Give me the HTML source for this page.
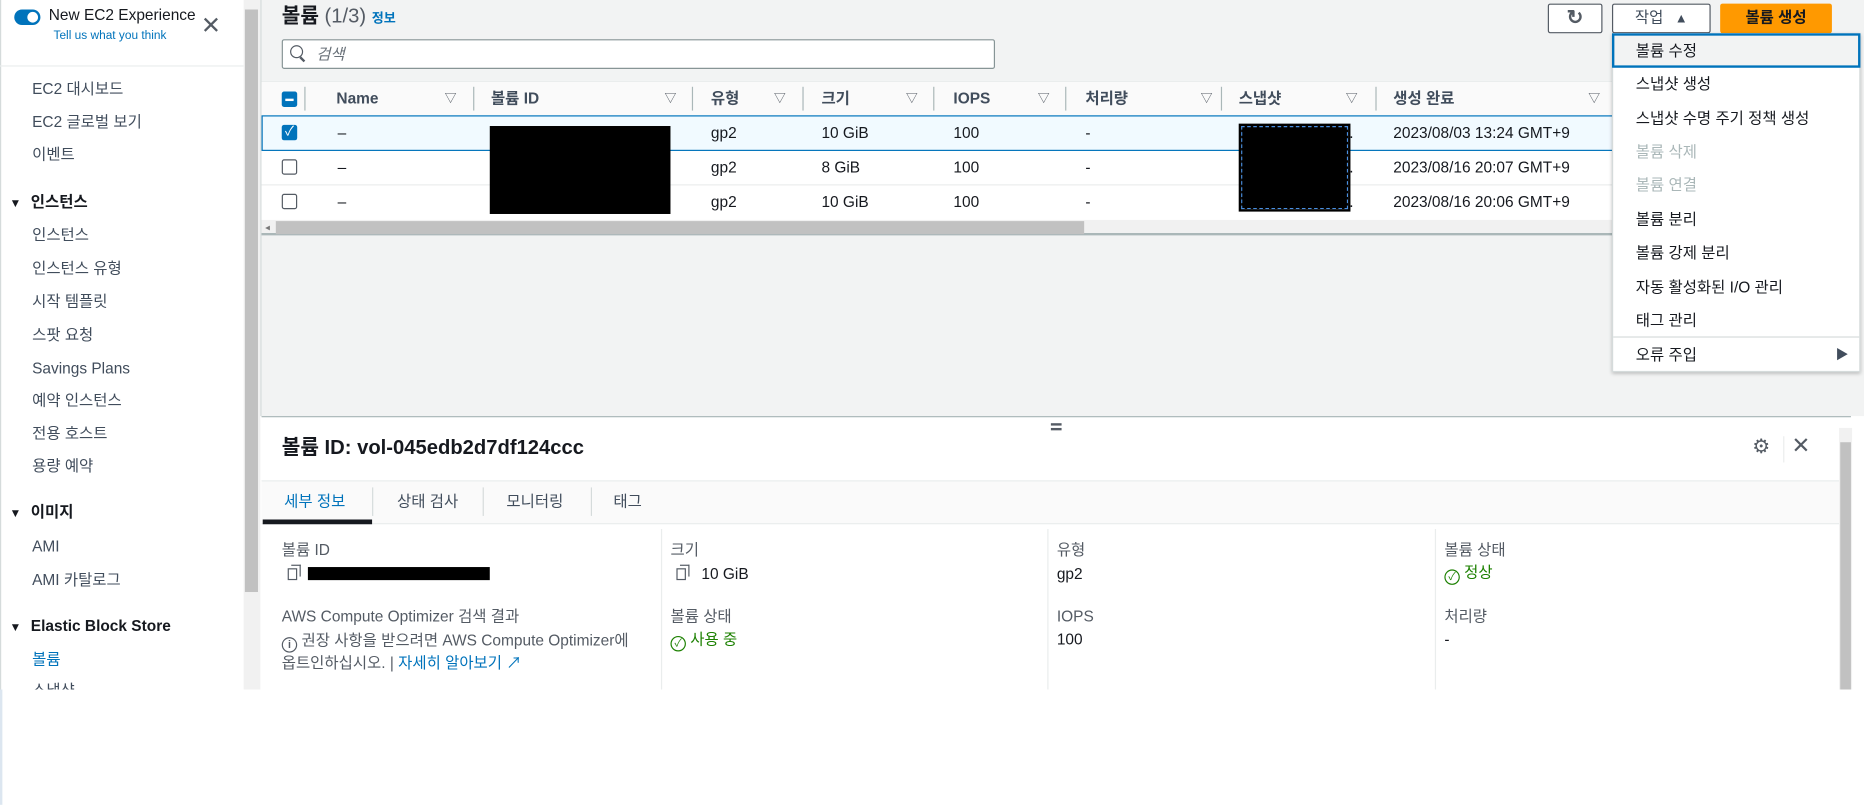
<!DOCTYPE html>
<html><head><meta charset="utf-8"><style>
*{box-sizing:border-box;margin:0;padding:0}
html,body{width:1864px;height:805px;overflow:hidden;background:#fff}
#w{position:absolute;left:0;top:0;width:1568px;height:677px;transform:scale(1.18878);transform-origin:0 0;font-family:"Liberation Sans","Noto Sans CJK KR",sans-serif;font-size:13px;line-height:16px;color:#16191f}
.a{position:absolute;white-space:nowrap}
.nav{left:27px;color:#414d5c}
.sec{left:8px;font-weight:bold;color:#16191f}
.sec:before{content:"▼";font-size:10px;margin-right:8px}
.th{font-weight:bold;color:#414d5c;top:75px}
.sort{top:76px;font-size:10px;color:#545b64}
.sep{top:73px;width:1px;height:20px;background:#aab7b8}
.cb{width:13px;height:13px;border:1px solid #545b64;border-radius:2px;background:#fff}
.td{color:#16191f}
.mi{left:1376px;font-size:13px}
.lab{color:#545b64}
</style></head><body><div id="w">
<div class="a" style="left:0;top:0;width:205px;height:580px;background:#fff;border-left:1px solid #d5dbdb"></div>
<div class="a" style="left:0;top:580px;width:2px;height:97px;background:#dce6f0"></div>
<div class="a" style="left:12px;top:8px;width:22px;height:13px;border-radius:7px;background:#0073bb"></div>
<div class="a" style="left:23px;top:10px;width:9px;height:9px;border-radius:50%;background:#fff"></div>
<div class="a" style="left:41px;top:5px;font-size:13px">New EC2 Experience</div>
<div class="a" style="left:45px;top:23px;font-size:10px;color:#0073bb">Tell us what you think</div>
<div class="a" style="left:169px;top:11px;font-size:20px;line-height:22px;color:#545b64">✕</div>
<div class="a" style="left:0;top:55px;width:205px;height:1px;background:#eaeded"></div>
<div class="a nav" style="top:67px">EC2 대시보드</div>
<div class="a nav" style="top:95px">EC2 글로벌 보기</div>
<div class="a nav" style="top:122px">이벤트</div>
<div class="a sec" style="top:162px">인스턴스</div>
<div class="a nav" style="top:190px">인스턴스</div>
<div class="a nav" style="top:218px">인스턴스 유형</div>
<div class="a nav" style="top:246px">시작 템플릿</div>
<div class="a nav" style="top:274px">스팟 요청</div>
<div class="a nav" style="top:302px">Savings Plans</div>
<div class="a nav" style="top:329px">예약 인스턴스</div>
<div class="a nav" style="top:357px">전용 호스트</div>
<div class="a nav" style="top:384px">용량 예약</div>
<div class="a sec" style="top:423px">이미지</div>
<div class="a nav" style="top:452px">AMI</div>
<div class="a nav" style="top:480px">AMI 카탈로그</div>
<div class="a sec" style="top:519px">Elastic Block Store</div>
<div class="a nav" style="top:547px;color:#0073bb">볼륨</div>
<div class="a" style="left:0;top:570px;width:205px;height:10px;overflow:hidden"><div class="a nav" style="top:3px">스냅샷</div></div>
<div class="a" style="left:205px;top:0;width:14px;height:580px;background:#f1f1f1"></div>
<div class="a" style="left:206px;top:8px;width:11px;height:490px;background:#c1c1c1"></div>
<div class="a" style="left:219px;top:0;width:1349px;height:350px;background:#f2f3f3;border-left:1px solid #d5dbdb"></div>
<div class="a" style="left:237px;top:4px;font-size:17px;line-height:20px;font-weight:bold">볼륨 <span style="font-weight:normal;color:#545b64">(1/3)</span> <span style="font-size:11px;color:#0073bb;font-weight:bold">정보</span></div>
<div class="a" style="left:237px;top:33px;width:600px;height:25px;background:#fff;border:1px solid #879596;border-radius:2px"></div>
<div class="a" style="left:244px;top:38px;width:11px;height:11px;border:1.5px solid #545b64;border-radius:50%"></div>
<div class="a" style="left:252px;top:49px;width:5px;height:1.5px;background:#545b64;transform:rotate(45deg)"></div>
<div class="a" style="left:266px;top:38px;font-style:italic;color:#687078">검색</div>
<div class="a" style="left:220px;top:68px;width:1328px;height:130px;background:#fff"></div>
<div class="a" style="left:220px;top:68px;width:1328px;height:30px;background:#fafafa;border-top:1px solid #eaeded"></div>
<div class="a" style="left:237px;top:77px;width:13px;height:13px;background:#0073bb;border-radius:2px"></div>
<div class="a" style="left:240px;top:83px;width:7px;height:2px;background:#fff"></div>
<div class="a sep" style="left:256px"></div>
<div class="a th" style="left:283px">Name</div><div class="a sort" style="left:374px">▽</div><div class="a sep" style="left:398px"></div>
<div class="a th" style="left:413px">볼륨 ID</div><div class="a sort" style="left:559px">▽</div><div class="a sep" style="left:582px"></div>
<div class="a th" style="left:598px">유형</div><div class="a sort" style="left:651px">▽</div><div class="a sep" style="left:675px"></div>
<div class="a th" style="left:691px">크기</div><div class="a sort" style="left:762px">▽</div><div class="a sep" style="left:785px"></div>
<div class="a th" style="left:802px">IOPS</div><div class="a sort" style="left:873px">▽</div><div class="a sep" style="left:896px"></div>
<div class="a th" style="left:913px">처리량</div><div class="a sort" style="left:1010px">▽</div><div class="a sep" style="left:1027px"></div>
<div class="a th" style="left:1042px">스냅샷</div><div class="a sort" style="left:1132px">▽</div><div class="a sep" style="left:1157px"></div>
<div class="a th" style="left:1172px">생성 완료</div><div class="a sort" style="left:1336px">▽</div>
<div class="a" style="left:220px;top:97px;width:1328px;height:30px;background:#f1faff;border:1px solid #0073bb"></div>
<div class="a" style="left:220px;top:155px;width:1328px;height:1px;background:#eaeded"></div>
<div class="a" style="left:237px;top:105px;width:13px;height:13px;background:#0073bb;border-radius:2px;color:#fff;font-size:11px;line-height:13px;text-align:center">✓</div>
<div class="a cb" style="left:237px;top:134px"></div>
<div class="a cb" style="left:237px;top:163px"></div>
<div class="a td" style="left:284px;top:104px">–</div><div class="a td" style="left:284px;top:133px">–</div><div class="a td" style="left:284px;top:162px">–</div>
<div class="a" style="left:412px;top:106px;width:152px;height:74px;background:#000"></div>
<div class="a td" style="left:598px;top:104px">gp2</div><div class="a td" style="left:598px;top:133px">gp2</div><div class="a td" style="left:598px;top:162px">gp2</div>
<div class="a td" style="left:691px;top:104px">10 GiB</div><div class="a td" style="left:691px;top:133px">8 GiB</div><div class="a td" style="left:691px;top:162px">10 GiB</div>
<div class="a td" style="left:802px;top:104px">100</div><div class="a td" style="left:802px;top:133px">100</div><div class="a td" style="left:802px;top:162px">100</div>
<div class="a td" style="left:913px;top:104px">-</div><div class="a td" style="left:913px;top:133px">-</div><div class="a td" style="left:913px;top:162px">-</div>
<div class="a" style="left:1044px;top:106px;width:90px;height:70px;background:#000;border:1px dashed #4a90e2;outline:2px solid #000"></div>
<div class="a td" style="left:1135px;top:104px">.</div><div class="a td" style="left:1135px;top:133px">.</div><div class="a td" style="left:1135px;top:162px">.</div>
<div class="a td" style="left:1172px;top:104px">2023/08/03 13:24 GMT+9</div>
<div class="a td" style="left:1172px;top:133px">2023/08/16 20:07 GMT+9</div>
<div class="a td" style="left:1172px;top:162px">2023/08/16 20:06 GMT+9</div>
<div class="a" style="left:220px;top:185px;width:1328px;height:13px;background:#f1f1f1;border-bottom:2px solid #aab7b8"></div>
<div class="a" style="left:232px;top:186px;width:680px;height:11px;background:#c1c1c1"></div>
<div class="a" style="left:223px;top:184px;font-size:8px;color:#777">◂</div>
<div class="a" style="left:1302px;top:3px;width:46px;height:25px;border:1px solid #545b64;border-radius:2px;background:#fff;text-align:center;font-size:17px;line-height:22px;color:#545b64;font-weight:bold">↻</div>
<div class="a" style="left:1356px;top:3px;width:83px;height:25px;border:1px solid #545b64;border-radius:2px;background:#fff;text-align:center;line-height:22px;color:#414d5c">작업 <span style="font-size:11px;margin-left:6px">▲</span></div>
<div class="a" style="left:1447px;top:3px;width:94px;height:25px;background:#ff9900;border-radius:2px;text-align:center;line-height:24px;font-weight:bold;color:#16191f">볼륨 생성</div>
<div class="a" style="left:1356px;top:28px;width:209px;height:285px;background:#fff;border:1px solid #d5dbdb;box-shadow:0 1px 3px rgba(0,0,0,.25)"></div>
<div class="a" style="left:1356px;top:28px;width:209px;height:29px;background:#f2f3f3;border:2px solid #0073bb"></div>
<div class="a mi" style="top:35px">볼륨 수정</div>
<div class="a mi" style="top:63px">스냅샷 생성</div>
<div class="a mi" style="top:92px">스냅샷 수명 주기 정책 생성</div>
<div class="a mi" style="top:120px;color:#aab7b8">볼륨 삭제</div>
<div class="a mi" style="top:148px;color:#aab7b8">볼륨 연결</div>
<div class="a mi" style="top:177px">볼륨 분리</div>
<div class="a mi" style="top:205px">볼륨 강제 분리</div>
<div class="a mi" style="top:234px">자동 활성화된 I/O 관리</div>
<div class="a mi" style="top:262px">태그 관리</div>
<div class="a" style="left:1357px;top:283px;width:207px;height:1px;background:#d5dbdb"></div>
<div class="a mi" style="top:291px">오류 주입</div>
<div class="a" style="left:1544px;top:291px;font-size:11px;color:#414d5c">▶</div>
<div class="a" style="left:220px;top:350px;width:1337px;height:230px;background:#fff;border-top:1px solid #aab7b8"></div>
<div class="a" style="left:884px;top:356px;width:9px;height:2px;background:#545b64"></div>
<div class="a" style="left:884px;top:360px;width:9px;height:2px;background:#545b64"></div>
<div class="a" style="left:237px;top:367px;font-size:17px;line-height:20px;font-weight:bold">볼륨 ID: vol-045edb2d7df124ccc</div>
<div class="a" style="left:1474px;top:366px;font-size:17px;line-height:20px;color:#545b64">⚙</div>
<div class="a" style="left:1500px;top:367px;width:1px;height:22px;background:#eaeded"></div>
<div class="a" style="left:1507px;top:365px;font-size:19px;line-height:22px;color:#545b64">✕</div>
<div class="a" style="left:220px;top:404px;width:1327px;height:37px;background:#fafafa;border-top:1px solid #eaeded;border-bottom:1px solid #eaeded"></div>
<div class="a" style="left:239px;top:414px;color:#0073bb">세부 정보</div>
<div class="a" style="left:221px;top:437px;width:92px;height:4px;background:#16191f"></div>
<div class="a" style="left:313px;top:410px;width:1px;height:24px;background:#d5dbdb"></div>
<div class="a" style="left:334px;top:414px;color:#414d5c">상태 검사</div>
<div class="a" style="left:406px;top:410px;width:1px;height:24px;background:#d5dbdb"></div>
<div class="a" style="left:426px;top:414px;color:#414d5c">모니터링</div>
<div class="a" style="left:497px;top:410px;width:1px;height:24px;background:#d5dbdb"></div>
<div class="a" style="left:516px;top:414px;color:#414d5c">태그</div>
<div class="a" style="left:556px;top:445px;width:1px;height:135px;background:#eaeded"></div>
<div class="a" style="left:881px;top:445px;width:1px;height:135px;background:#eaeded"></div>
<div class="a" style="left:1207px;top:445px;width:1px;height:135px;background:#eaeded"></div>
<div class="a lab" style="left:237px;top:455px">볼륨 ID</div>
<div class="a" style="left:242px;top:478px;width:8px;height:10px;border:1.5px solid #545b64"></div>
<div class="a" style="left:245px;top:475px;width:8px;height:10px;border-top:1.5px solid #545b64;border-right:1.5px solid #545b64"></div>
<div class="a" style="left:259px;top:477px;width:153px;height:11px;background:#000"></div>
<div class="a lab" style="left:237px;top:511px">AWS Compute Optimizer 검색 결과</div>
<div class="a lab" style="left:237px;top:531px"><span style="display:inline-block;width:13px;height:13px;border:1.5px solid #545b64;border-radius:50%;font-size:9px;line-height:10px;text-align:center;font-weight:bold;vertical-align:-2px">i</span> 권장 사항을 받으려면 AWS Compute Optimizer에</div>
<div class="a lab" style="left:237px;top:550px">옵트인하십시오. | <span style="color:#0073bb">자세히 알아보기 ↗</span></div>
<div class="a lab" style="left:564px;top:455px">크기</div>
<div class="a" style="left:569px;top:478px;width:8px;height:10px;border:1.5px solid #545b64"></div>
<div class="a" style="left:572px;top:475px;width:8px;height:10px;border-top:1.5px solid #545b64;border-right:1.5px solid #545b64"></div>
<div class="a" style="left:590px;top:475px">10 GiB</div>
<div class="a lab" style="left:564px;top:511px">볼륨 상태</div>
<div class="a" style="left:564px;top:530px;color:#1d8102"><span style="display:inline-block;width:13px;height:13px;border:1.5px solid #1d8102;border-radius:50%;font-size:9px;line-height:10px;text-align:center;vertical-align:-2px">✓</span> 사용 중</div>
<div class="a lab" style="left:889px;top:455px">유형</div>
<div class="a" style="left:889px;top:475px">gp2</div>
<div class="a lab" style="left:889px;top:511px">IOPS</div>
<div class="a" style="left:889px;top:530px">100</div>
<div class="a lab" style="left:1215px;top:455px">볼륨 상태</div>
<div class="a" style="left:1215px;top:474px;color:#1d8102"><span style="display:inline-block;width:13px;height:13px;border:1.5px solid #1d8102;border-radius:50%;font-size:9px;line-height:10px;text-align:center;vertical-align:-2px">✓</span> 정상</div>
<div class="a lab" style="left:1215px;top:511px">처리량</div>
<div class="a" style="left:1215px;top:530px">-</div>
<div class="a" style="left:1547px;top:360px;width:11px;height:220px;background:#f1f1f1"></div>
<div class="a" style="left:1548px;top:372px;width:9px;height:208px;background:#c1c1c1"></div>
</div></body></html>
